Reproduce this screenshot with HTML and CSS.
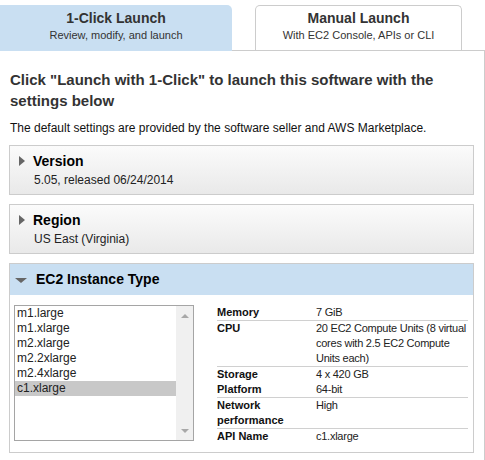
FILE: index.html
```html
<!DOCTYPE html>
<html>
<head>
<meta charset="utf-8">
<link rel="stylesheet" href="styles.css">
</head>
<body>
<div class="tabs">
  <div class="tab tab-active">
    <div class="tab-title">1-Click Launch</div>
    <div class="tab-sub">Review, modify, and launch</div>
  </div>
  <div class="tab-rest">
    <div class="tab tab-other">
      <div class="tab-title">Manual Launch</div>
      <div class="tab-sub">With EC2 Console, APIs or CLI</div>
    </div>
  </div>
</div>
<div class="panel">
  <h1 class="heading">Click "Launch with 1-Click" to launch this software with the settings below</h1>
  <p class="intro">The default settings are provided by the software seller and AWS Marketplace.</p>

  <div class="section">
    <div class="sec-title"><span class="tri-right"></span>Version</div>
    <div class="sec-value">5.05, released 06/24/2014</div>
  </div>

  <div class="section">
    <div class="sec-title"><span class="tri-right"></span>Region</div>
    <div class="sec-value">US East (Virginia)</div>
  </div>

  <div class="section-open">
    <div class="open-head"><span class="tri-down"></span>EC2 Instance Type</div>
    <div class="open-body">
      <div class="listbox">
        <div class="list-items">
          <div class="item">m1.large</div>
          <div class="item">m1.xlarge</div>
          <div class="item">m2.xlarge</div>
          <div class="item">m2.2xlarge</div>
          <div class="item">m2.4xlarge</div>
          <div class="item selected">c1.xlarge</div>
        </div>
        <div class="scrollbar">
          <span class="arrow-up"></span>
          <span class="arrow-down"></span>
        </div>
      </div>
      <table class="specs">
        <tr class="line"><th>Memory</th><td>7 GiB</td></tr>
        <tr class="line"><th>CPU</th><td>20 EC2 Compute Units (8 virtual cores with 2.5 EC2 Compute Units each)</td></tr>
        <tr><th>Storage</th><td>4 x 420 GB</td></tr>
        <tr class="line"><th>Platform</th><td>64-bit</td></tr>
        <tr class="line"><th>Network performance</th><td>High</td></tr>
        <tr><th>API Name</th><td>c1.xlarge</td></tr>
      </table>
    </div>
  </div>
</div>
</body>
</html>
```
FILE: styles.css
```css
* { box-sizing: border-box; }
html, body { margin: 0; padding: 0; background: #fff; }
body {
  font-family: "Liberation Sans", Arial, sans-serif;
  color: #222;
  width: 485px;
  overflow: hidden;
}
.tabs {
  display: flex;
  align-items: flex-end;
  height: 51px;
}
.tab {
  text-align: center;
  color: #333;
}
.tab-title {
  font-size: 14px;
  font-weight: bold;
  line-height: 18px;
}
.tab-sub {
  font-size: 11px;
  line-height: 16px;
}
.tab-active {
  width: 232px;
  height: 46px;
  background: #c9dff2;
  border-radius: 0 5px 0 0;
  padding-top: 4px;
}
.tab-rest {
  flex: 1;
  height: 51px;
  border-bottom: 1px solid #ccc;
  display: flex;
  align-items: flex-end;
}
.tab-other {
  margin-left: 23px;
  width: 207px;
  height: 45px;
  border: 1px solid #ccc;
  border-bottom: none;
  border-radius: 5px 5px 0 0;
  padding-top: 3px;
  background: #fff;
}
.panel {
  border-right: 1px solid #ccc;
  padding: 18px 10px 20px 9px;
}
.heading {
  margin: 0 0 8px 1px;
  font-size: 15px;
  line-height: 21px;
  font-weight: bold;
  color: #333;
}
.intro {
  margin: 0 0 8px 1px;
  font-size: 12px;
  line-height: 18px;
  color: #111;
}
.section {
  border: 1px solid #ccc;
  background: linear-gradient(#fbfbfb, #e9e9e9);
  padding: 5px 0 5px 9px;
  margin-bottom: 9px;
}
.sec-title {
  font-size: 14px;
  font-weight: bold;
  line-height: 20px;
  color: #000;
  display: flex;
  align-items: center;
}
.tri-right {
  width: 0;
  height: 0;
  border-top: 5px solid transparent;
  border-bottom: 5px solid transparent;
  border-left: 6px solid #666;
  margin-right: 8px;
}
.sec-value {
  font-size: 12px;
  line-height: 18px;
  padding-left: 15px;
  color: #222;
}
.section-open {
  border: 1px solid #ccc;
}
.open-head {
  background: #c9dff2;
  font-size: 14px;
  font-weight: bold;
  line-height: 20px;
  padding: 5px 0 6px 5px;
  color: #000;
  display: flex;
  align-items: center;
}
.tri-down {
  width: 0;
  height: 0;
  border-left: 6px solid transparent;
  border-right: 6px solid transparent;
  border-top: 5px solid #666;
  margin: 3px 9px 0 0;
}
.open-body {
  display: flex;
  align-items: flex-start;
  padding: 10px 5px 8px 4px;
}
.listbox {
  width: 180px;
  height: 136px;
  border: 1px solid #a5a5a5;
  display: flex;
  flex: none;
}
.list-items {
  flex: 1;
}
.item {
  font-size: 12px;
  line-height: 15px;
  padding-left: 2px;
  color: #222;
}
.item.selected {
  background: #c8c8c8;
}
.scrollbar {
  width: 17px;
  background: #f0f0f0;
  display: flex;
  flex-direction: column;
  justify-content: space-between;
  align-items: center;
  padding: 8px 0 7px;
}
.arrow-up {
  width: 0; height: 0;
  border-left: 4px solid transparent;
  border-right: 4px solid transparent;
  border-bottom: 4px solid #a8a8a8;
}
.arrow-down {
  width: 0; height: 0;
  border-left: 4px solid transparent;
  border-right: 4px solid transparent;
  border-top: 4px solid #a8a8a8;
}
.specs {
  margin-left: 23px;
  width: 251px;
  border-collapse: collapse;
  font-size: 11px;
  line-height: 15px;
  color: #222;
}
.specs th, .specs td {
  padding: 0;
  vertical-align: top;
  text-align: left;
}
.specs th {
  width: 99px;
  font-weight: bold;
  color: #111;
}
.specs td {
  letter-spacing: -0.25px;
}
.specs tr.line {
  border-bottom: 1px solid #d0d0d0;
}
```
